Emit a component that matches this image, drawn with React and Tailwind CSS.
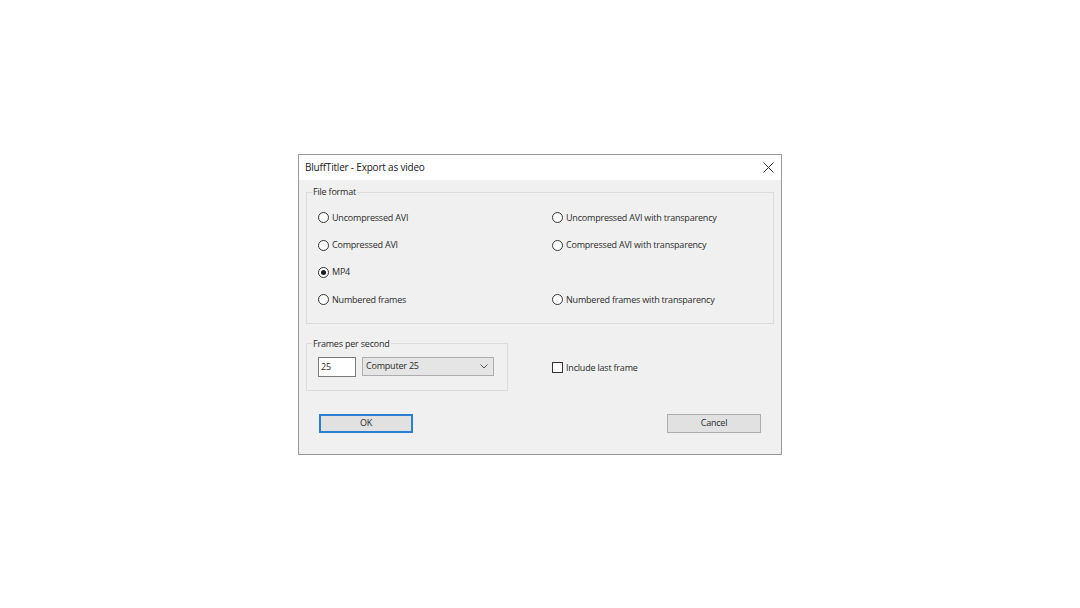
import React, { useState } from "react";

const font = "font-['Segoe_UI','Open_Sans','Noto_Sans',sans-serif]";
const textClasses = "text-[9px] leading-[14px] tracking-[-0.2px] text-[#2b2b2b]";

const formats = [
  ["Uncompressed AVI", "Uncompressed AVI with transparency"],
  ["Compressed AVI", "Compressed AVI with transparency"],
  ["MP4", null],
  ["Numbered frames", "Numbered frames with transparency"],
];

const Radio = ({ label, checked, onClick }) => (
  <button type="button" className="flex items-center gap-[3px]" onClick={onClick}>
    <span className="w-[11px] h-[11px] rounded-full border border-[#333] bg-white flex items-center justify-center">
      {checked && <span className="w-[5px] h-[5px] rounded-full bg-[#1a1a1a]" />}
    </span>
    <span className={textClasses}>{label}</span>
  </button>
);

const App = () => {
  const [format, setFormat] = useState("MP4");
  const [includeLast, setIncludeLast] = useState(false);

  return (
    <div className={`w-[1080px] h-[608px] bg-white pt-[154px] pl-[298px] ${font}`}>
      <div className="w-[484px] h-[301px] border border-[#9a9a9a] flex flex-col bg-[#f0f0f0]">
        <div className="h-[25px] bg-white flex items-center justify-between pl-[6px] pr-[7px]">
          <span className="text-[10px] tracking-[-0.2px] text-[#1a1a1a]">BluffTitler - Export as video</span>
          <svg width="11" height="11" viewBox="0 0 11 11" className="text-[#333]">
            <path d="M0.5 0.5 L10.5 10.5 M10.5 0.5 L0.5 10.5" stroke="currentColor" strokeWidth="1" />
          </svg>
        </div>

        <div className="flex-1 px-[7px] pt-[5px]">
          <fieldset className="border border-[#dcdcdc] pl-[11px] pt-[5px] pb-[9px]">
            <legend className={`ml-[-6px] px-[1px] ${textClasses}`}>File format</legend>
            <div className="grid grid-cols-[234px_1fr] auto-rows-[27.4px] items-center">
              {formats.map(([left, right]) => (
                <React.Fragment key={left}>
                  <Radio label={left} checked={format === left} onClick={() => setFormat(left)} />
                  {right ? (
                    <Radio label={right} checked={format === right} onClick={() => setFormat(right)} />
                  ) : (
                    <span />
                  )}
                </React.Fragment>
              ))}
            </div>
          </fieldset>

          <div className="flex items-end mt-[13px]">
            <fieldset className="w-[202px] border border-[#dcdcdc] pl-[11px] pt-[6px] pb-[13px]">
              <legend className={`ml-[-6px] px-[1px] ${textClasses}`}>Frames per second</legend>
              <div className="flex items-start gap-[6px]">
                <div className="w-[38px] h-[20px] bg-white border border-[#7a7a7a] pl-[2px] flex items-center">
                  <span className={textClasses}>25</span>
                </div>
                <div className="w-[132px] h-[19px] bg-[#e5e5e5] border border-[#adadad] flex items-center justify-between pl-[3px] pr-[5px]">
                  <span className={textClasses}>Computer 25</span>
                  <svg width="8" height="5" viewBox="0 0 8 5">
                    <path d="M0.5 0.5 L4 4 L7.5 0.5" fill="none" stroke="#555" strokeWidth="1" />
                  </svg>
                </div>
              </div>
            </fieldset>
            <button
              type="button"
              className="ml-[44px] mb-[16px] flex items-center gap-[3px]"
              onClick={() => setIncludeLast(!includeLast)}
            >
              <span className="w-[11px] h-[11px] border border-[#333] bg-white flex items-center justify-center text-[9px] leading-none">
                {includeLast ? "✓" : ""}
              </span>
              <span className={textClasses}>Include last frame</span>
            </button>
          </div>

          <div className="flex justify-between px-[13px] mt-[23px]">
            <button
              type="button"
              className={`w-[94px] h-[19px] bg-[#e1e1e1] border-2 border-[#2a7fd4] flex items-center justify-center ${textClasses}`}
            >
              OK
            </button>
            <button
              type="button"
              className={`w-[94px] h-[19px] bg-[#e1e1e1] border border-[#adadad] flex items-center justify-center ${textClasses}`}
            >
              Cancel
            </button>
          </div>
        </div>
      </div>
    </div>
  );
};

export default App;
